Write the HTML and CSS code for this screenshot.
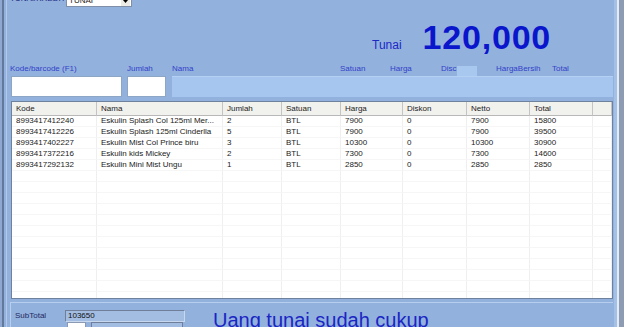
FILE: index.html
```html
<!DOCTYPE html>
<html lang="id">
<head>
    <meta charset="UTF-8">
    <meta name="viewport" content="width=device-width, initial-scale=1.0">
    <title>Kasir</title>
    <link rel="stylesheet" href="styles.css">
</head>
<body>
    <div class="window">
        <div class="frame-left"></div>
        <div class="main">
            <div class="top">
                <div class="mode-row">
                    <span class="mode-label">TUNAI/KREDIT</span>
                    <div class="combo">
                        <span class="combo-text">TUNAI</span>
                        <span class="combo-btn">
                            <svg width="5" height="3" viewBox="0 0 5 3"><path d="M0 0h5L2.5 3z" fill="#000"/></svg>
                        </span>
                    </div>
                </div>
                <div class="total-row">
                    <span class="total-caption">Tunai</span>
                    <span class="total-value">120,000</span>
                </div>
            </div>

            <div class="entry">
                <div class="field field-kode">
                    <div class="field-label">Kode/barcode (F1)</div>
                    <div class="input"></div>
                </div>
                <div class="field field-jumlah">
                    <div class="field-label">Jumlah</div>
                    <div class="input"></div>
                </div>
                <div class="field field-nama">
                    <div class="nama-labels">
                        <span>Nama</span>
                        <span>Satuan</span>
                        <span>Harga</span>
                        <span>Disc</span>
                        <span class="disc-box"></span>
                        <span></span>
                        <span>HargaBersih</span>
                        <span>Total</span>
                    </div>
                    <div class="nama-bar"></div>
                </div>
            </div>

            <div class="grid-wrap">
                <table class="grid">
                    <colgroup>
                        <col style="width:85px"><col style="width:126px"><col style="width:59px">
                        <col style="width:59px"><col style="width:62px"><col style="width:64px">
                        <col style="width:63px"><col style="width:63px"><col style="width:19px">
                    </colgroup>
                    <thead>
                        <tr><th>Kode</th><th>Nama</th><th>Jumlah</th><th>Satuan</th><th>Harga</th><th>Diskon</th><th>Netto</th><th>Total</th><th></th></tr>
                    </thead>
                    <tbody>
                        <tr><td>8993417412240</td><td>Eskulin Splash Col 125ml Mer...</td><td>2</td><td>BTL</td><td>7900</td><td>0</td><td>7900</td><td>15800</td><td></td></tr>
                        <tr><td>8993417412226</td><td>Eskulin Splash 125ml Cinderlla</td><td>5</td><td>BTL</td><td>7900</td><td>0</td><td>7900</td><td>39500</td><td></td></tr>
                        <tr><td>8993417402227</td><td>Eskulin Mist Col Prince biru</td><td>3</td><td>BTL</td><td>10300</td><td>0</td><td>10300</td><td>30900</td><td></td></tr>
                        <tr><td>8993417372216</td><td>Eskulin kids Mickey</td><td>2</td><td>BTL</td><td>7300</td><td>0</td><td>7300</td><td>14600</td><td></td></tr>
                        <tr><td>8993417292132</td><td>Eskulin Mini Mist Ungu</td><td>1</td><td>BTL</td><td>2850</td><td>0</td><td>2850</td><td>2850</td><td></td></tr>
                        <tr class="empty"><td></td><td></td><td></td><td></td><td></td><td></td><td></td><td></td><td></td></tr>
                        <tr class="empty"><td></td><td></td><td></td><td></td><td></td><td></td><td></td><td></td><td></td></tr>
                        <tr class="empty"><td></td><td></td><td></td><td></td><td></td><td></td><td></td><td></td><td></td></tr>
                        <tr class="empty"><td></td><td></td><td></td><td></td><td></td><td></td><td></td><td></td><td></td></tr>
                        <tr class="empty"><td></td><td></td><td></td><td></td><td></td><td></td><td></td><td></td><td></td></tr>
                        <tr class="empty"><td></td><td></td><td></td><td></td><td></td><td></td><td></td><td></td><td></td></tr>
                        <tr class="empty"><td></td><td></td><td></td><td></td><td></td><td></td><td></td><td></td><td></td></tr>
                        <tr class="empty"><td></td><td></td><td></td><td></td><td></td><td></td><td></td><td></td><td></td></tr>
                        <tr class="empty"><td></td><td></td><td></td><td></td><td></td><td></td><td></td><td></td><td></td></tr>
                        <tr class="empty"><td></td><td></td><td></td><td></td><td></td><td></td><td></td><td></td><td></td></tr>
                        <tr class="empty"><td></td><td></td><td></td><td></td><td></td><td></td><td></td><td></td><td></td></tr>
                        <tr class="empty"><td></td><td></td><td></td><td></td><td></td><td></td><td></td><td></td><td></td></tr>
                        <tr class="empty"><td></td><td></td><td></td><td></td><td></td><td></td><td></td><td></td><td></td></tr>
                    </tbody>
                </table>
            </div>

            <div class="summary">
                <div class="summary-fields">
                    <div class="sub-row">
                        <span class="sub-label">SubTotal</span>
                        <span class="sub-input">103650</span>
                    </div>
                    <div class="sub-row2">
                        <span class="box-white"></span>
                        <span class="box-blue"></span>
                    </div>
                </div>
                <div class="message">Uang tunai sudah cukup</div>
            </div>
        </div>
        <div class="frame-right"></div>
    </div>
</body>
</html>
```

FILE: styles.css
```css
body {
    margin: 0;
    height: 327px;
    overflow: hidden;
    background-color: #93b1dd;
    font-family: "Liberation Sans", Arial, sans-serif;
    font-size: 8px;
}
.window {
    display: flex;
    height: 327px;
    overflow: hidden;
}
.frame-left {
    width: 7px;
    flex: none;
    background: linear-gradient(to right, #8ea8d1 0, #8ea8d1 2px, #63799b 2px, #63799b 4px, #93b1dd 4px, #93b1dd 6px, #b2c9ea 6px);
}
.frame-right {
    width: 10px;
    flex: none;
    background: linear-gradient(to right, #a5c0e6 0, #a5c0e6 3px, #e2ebf6 3px, #e2ebf6 5px, #8d9bb3 5px);
}
.main {
    flex: 1;
    min-width: 0;
    display: flex;
    flex-direction: column;
    padding: 0 1px 0 4px;
}

/* header */
.top {
    height: 62px;
    flex: none;
    display: flex;
    flex-direction: column;
}
.mode-row {
    display: flex;
    align-items: flex-start;
    height: 14px;
    margin-top: -7px;
}
.mode-label {
    width: 56px;
    margin: 1px 0 0 -1px;
    line-height: 10px;
    color: #1b2a80;
}
.combo {
    width: 64px;
    height: 12px;
    display: flex;
    background: white;
    border: 1px solid #7f8fa8;
}
.combo-text {
    padding: 1px 0 0 2px;
    line-height: 12px;
    color: #222;
}
.combo-btn {
    margin: 0 1px 0 auto;
    width: 9px;
    display: flex;
    align-items: flex-end;
    justify-content: center;
    padding-bottom: 3px;
    box-sizing: border-box;
    background: #ecebe6;
}
.total-row {
    display: flex;
    align-items: baseline;
    margin-top: 13px;
    padding-left: 361px;
    line-height: 35px;
}
.total-caption {
    font-size: 12px;
    color: #1c28c6;
}
.total-value {
    margin-left: 21px;
    font-size: 34px;
    font-weight: bold;
    letter-spacing: 0.8px;
    color: #0a16cc;
}

/* entry fields */
.entry {
    display: flex;
    flex: none;
}
.field-label,
.nama-labels {
    line-height: 14px;
    height: 14px;
    color: #3242c8;
    white-space: nowrap;
}
.field-kode {
    width: 111px;
    margin-right: 5px;
}
.field-kode .field-label {
    margin-left: -1px;
}
.field-jumlah {
    width: 39px;
    margin-right: 6px;
}
.field-nama {
    flex: 1;
}
.input {
    height: 19px;
    background: white;
    border: 1px solid #8ea6c6;
}
.nama-labels {
    display: grid;
    grid-template-columns: 168px 50px 51px 16px 20px 19px 56px auto;
}
.disc-box {
    align-self: end;
    height: 10px;
    background: #a9c8f0;
}
.nama-bar {
    height: 21px;
    background: #a6c6ef;
    border-top: 1px solid #b4d0f4;
    box-sizing: border-box;
}

/* grid */
.grid-wrap {
    flex: none;
    margin-top: 4px;
    height: 196px;
    overflow: hidden;
    background: white;
    border: 1px solid #6e829e;
}
.grid {
    table-layout: fixed;
    width: 600px;
    border-collapse: separate;
    border-spacing: 0;
    color: #222;
}
.grid th {
    height: 13px;
    line-height: 13px;
    padding: 0 0 0 4px;
    text-align: left;
    font-weight: normal;
    background: #f1f1ee;
    border-right: 1px solid #c4c4c4;
    border-bottom: 1px solid #b8b8b8;
    white-space: nowrap;
    overflow: hidden;
}
.grid td {
    height: 10px;
    line-height: 10px;
    padding: 0 0 0 4px;
    border-right: 1px solid #efefef;
    border-bottom: 1px solid #f6f6f6;
    white-space: nowrap;
    overflow: hidden;
}

/* summary */
.summary {
    flex: 1;
    display: flex;
    margin: 3px 0 0 -1px;
    padding: 7px 0 0 4px;
    border-top: 1px solid #b8ceee;
    border-left: 1px solid #b8ceee;
}
.summary-fields {
    width: 198px;
    flex: none;
}
.sub-row {
    display: flex;
    height: 12px;
}
.sub-label {
    width: 50px;
    line-height: 12px;
    color: #1e2a60;
}
.sub-input {
    width: 116px;
    height: 10px;
    line-height: 10px;
    padding-left: 2px;
    background: #a3bde2;
    border: 1px solid #6f7f99;
    border-right-color: #c8d8ee;
    border-bottom-color: #c8d8ee;
    color: #111;
}
.sub-row2 {
    display: flex;
    padding-left: 52px;
}
.box-white {
    width: 17px;
    height: 10px;
    background: white;
    border: 1px solid #8a9ab4;
}
.box-blue {
    width: 90px;
    height: 10px;
    margin-left: 5px;
    background: #a3bde2;
    border: 1px solid #6f7f99;
}
.message {
    font-size: 20px;
    line-height: 20px;
    color: #1a26c4;
    white-space: nowrap;
}
```
